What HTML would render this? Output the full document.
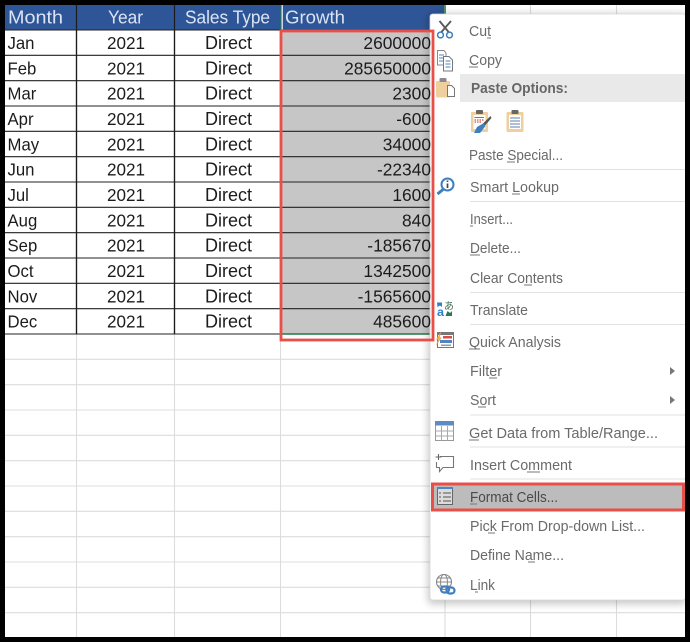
<!DOCTYPE html>
<html><head><meta charset="utf-8"><style>
html,body{margin:0;padding:0;background:#000;width:690px;height:642px;overflow:hidden}
svg{display:block;position:absolute;left:0;top:0}
text{font-family:"Liberation Sans",sans-serif}
.c{font-size:18px;fill:#1c1c1c}
.h{font-size:18px;fill:#dbe4f2}
.m{font-size:15px;fill:#6a6a6a}
.u{stroke:#777;stroke-width:1}
.g{stroke:#dcdcdc;stroke-width:1.1;fill:none}
.k{stroke:#222;stroke-width:1.1}
</style></head><body>
<svg width="690" height="642" viewBox="0 0 690 642" xmlns="http://www.w3.org/2000/svg">
<defs><filter id="s" x="-10%" y="-10%" width="120%" height="120%"><feGaussianBlur stdDeviation="4"/></filter>
<filter id="b"><feGaussianBlur stdDeviation="0.3"/></filter></defs>
<rect width="690" height="642" fill="#000"/>
<g filter="url(#b)">
<rect x="5" y="5" width="680" height="632" fill="#fff"/>
<!-- light grid -->
<path class="g" d="M5 359.3H685M5 384.7H685M5 410H685M5 435.3H685M5 460.7H685M5 486H685M5 511.3H685M5 536.7H685M5 562H685M5 587.3H685M5 612.7H685M76.500 334V637M174.500 334V637M280.500 334V637M445 5V637M530.500 5V637M616.500 5V637M445 30H685M445 55H685"/>
<!-- header -->
<rect x="5" y="5" width="439" height="25" fill="#2f5597"/>
<!-- selection -->
<rect x="281" y="30" width="163" height="304" fill="#c6c6c6"/>
<path d="M76.500 5V334M174.500 5V334" stroke="#1a1a1a" stroke-width="1.200"/>
<path d="M281 5V30" stroke="#1f7a45" stroke-width="1"/><path d="M282.200 5V30" stroke="#e8eef6" stroke-width="1.300"/>
<path d="M445 5V30" stroke="#1f7a45" stroke-width="1.600"/>
<path class="k" d="M5 30H444M5 55.300H444M5 80.700H444M5 106H444M5 131.300H444M5 156.700H444M5 182H444M5 207.300H444M5 232.700H444M5 258H444M5 283.300H444M5 308.700H444M5 334H280"/>
<path d="M281 334H444" stroke="#1f7a45" stroke-width="1.600"/>
<text class="h" x="8" y="23.500" textLength="55" lengthAdjust="spacingAndGlyphs">Month</text>
<text class="h" x="108" y="23.500" textLength="35" lengthAdjust="spacingAndGlyphs">Year</text>
<text class="h" x="185" y="23.500" textLength="85" lengthAdjust="spacingAndGlyphs">Sales Type</text>
<text class="h" x="285" y="23.500" textLength="60" lengthAdjust="spacingAndGlyphs">Growth</text>
<g transform="translate(7.500 0) scale(.93 1)">
<text class="c" x="0" y="49">Jan</text><text class="c" x="0" y="74.300">Feb</text><text class="c" x="0" y="99.700">Mar</text><text class="c" x="0" y="125">Apr</text><text class="c" x="0" y="150.300">May</text><text class="c" x="0" y="175.700">Jun</text><text class="c" x="0" y="201">Jul</text><text class="c" x="0" y="226.300">Aug</text><text class="c" x="0" y="251.700">Sep</text><text class="c" x="0" y="277">Oct</text><text class="c" x="0" y="302.300">Nov</text><text class="c" x="0" y="327.700">Dec</text>
</g>
<g transform="translate(107 0) scale(.95 1)">
<text class="c" x="0" y="49">2021</text><text class="c" x="0" y="74.300">2021</text><text class="c" x="0" y="99.700">2021</text><text class="c" x="0" y="125">2021</text><text class="c" x="0" y="150.300">2021</text><text class="c" x="0" y="175.700">2021</text><text class="c" x="0" y="201">2021</text><text class="c" x="0" y="226.300">2021</text><text class="c" x="0" y="251.700">2021</text><text class="c" x="0" y="277">2021</text><text class="c" x="0" y="302.300">2021</text><text class="c" x="0" y="327.700">2021</text>
</g>
<text class="c" x="205" y="49" textLength="47" lengthAdjust="spacingAndGlyphs">Direct</text><text class="c" x="205" y="74.300" textLength="47" lengthAdjust="spacingAndGlyphs">Direct</text><text class="c" x="205" y="99.700" textLength="47" lengthAdjust="spacingAndGlyphs">Direct</text><text class="c" x="205" y="125" textLength="47" lengthAdjust="spacingAndGlyphs">Direct</text><text class="c" x="205" y="150.300" textLength="47" lengthAdjust="spacingAndGlyphs">Direct</text><text class="c" x="205" y="175.700" textLength="47" lengthAdjust="spacingAndGlyphs">Direct</text><text class="c" x="205" y="201" textLength="47" lengthAdjust="spacingAndGlyphs">Direct</text><text class="c" x="205" y="226.300" textLength="47" lengthAdjust="spacingAndGlyphs">Direct</text><text class="c" x="205" y="251.700" textLength="47" lengthAdjust="spacingAndGlyphs">Direct</text><text class="c" x="205" y="277" textLength="47" lengthAdjust="spacingAndGlyphs">Direct</text><text class="c" x="205" y="302.300" textLength="47" lengthAdjust="spacingAndGlyphs">Direct</text><text class="c" x="205" y="327.700" textLength="47" lengthAdjust="spacingAndGlyphs">Direct</text>
<path d="M76.500 30V334M174.500 30V334M280.500 30V334" stroke="#1a1a1a" stroke-width="1.200"/>
<!-- menu shadow + body -->
<rect x="428" y="14" width="258" height="590" rx="3" fill="#000" opacity=".22" filter="url(#s)"/>
<rect x="430" y="14" width="255" height="586" rx="3" fill="#fff"/>
<path d="M430 17V597Q430 600 433 600H685M430 17Q430 14 433 14H685" fill="none" stroke="#d8d8d8" stroke-width=".8"/>
<rect x="685" y="5" width="5" height="637" fill="#000"/>
<rect x="5" y="637" width="685" height="5" fill="#000"/>
<!-- values -->
<g transform="translate(431 0) scale(.965 1)" text-anchor="end">
<text class="c" x="0" y="49">2600000</text><text class="c" x="0" y="74.300">285650000</text><text class="c" x="0" y="99.700">2300</text><text class="c" x="0" y="125">-600</text><text class="c" x="0" y="150.300">34000</text><text class="c" x="0" y="175.700">-22340</text><text class="c" x="0" y="201">1600</text><text class="c" x="0" y="226.300">840</text><text class="c" x="0" y="251.700">-185670</text><text class="c" x="0" y="277">1342500</text><text class="c" x="0" y="302.300">-1565600</text><text class="c" x="0" y="327.700">485600</text>
</g>
<!-- paste band + separators -->
<rect x="460" y="74" width="225" height="28" fill="#e9e9e9"/>
<path d="M470 169.500H685M470 201.500H685M470 292.500H685M470 324.500H685M470 415H685M470 447H685M470 479H685" stroke="#e2e2e2" stroke-width="1"/>
<!-- highlight -->
<rect x="432.500" y="484" width="251" height="26" fill="#bcbcbc" stroke="#e8504a" stroke-width="3"/>
<!-- menu text -->
<text class="m" x="469" y="36" textLength="22" lengthAdjust="spacingAndGlyphs">Cut</text>
<text class="m" x="469" y="65" textLength="33" lengthAdjust="spacingAndGlyphs">Copy</text>
<text class="m" x="471" y="93" textLength="97" lengthAdjust="spacingAndGlyphs" font-weight="700" style="fill:#666">Paste Options:</text>
<text class="m" x="469" y="160" textLength="94" lengthAdjust="spacingAndGlyphs">Paste Special...</text>
<text class="m" x="470" y="192" textLength="89" lengthAdjust="spacingAndGlyphs">Smart Lookup</text>
<text class="m" x="470" y="224" textLength="43" lengthAdjust="spacingAndGlyphs">Insert...</text>
<text class="m" x="470" y="253" textLength="51" lengthAdjust="spacingAndGlyphs">Delete...</text>
<text class="m" x="470" y="283" textLength="93" lengthAdjust="spacingAndGlyphs">Clear Contents</text>
<text class="m" x="470" y="315" textLength="58" lengthAdjust="spacingAndGlyphs">Translate</text>
<text class="m" x="469" y="347" textLength="92" lengthAdjust="spacingAndGlyphs">Quick Analysis</text>
<text class="m" x="470" y="376" textLength="32" lengthAdjust="spacingAndGlyphs">Filter</text>
<text class="m" x="470" y="405" textLength="26" lengthAdjust="spacingAndGlyphs">Sort</text>
<text class="m" x="469" y="438" textLength="189" lengthAdjust="spacingAndGlyphs">Get Data from Table/Range...</text>
<text class="m" x="470" y="470" textLength="102" lengthAdjust="spacingAndGlyphs">Insert Comment</text>
<text class="m" x="470" y="502" textLength="88" lengthAdjust="spacingAndGlyphs" style="fill:#4a4a4a">Format Cells...</text>
<text class="m" x="470" y="531" textLength="175" lengthAdjust="spacingAndGlyphs">Pick From Drop-down List...</text>
<text class="m" x="470" y="560" textLength="94" lengthAdjust="spacingAndGlyphs">Define Name...</text>
<text class="m" x="470" y="590" textLength="25" lengthAdjust="spacingAndGlyphs">Link</text>
<!-- access-key underlines -->
<path class="u" d="M487 38H491M469 67H478M507 162H515M512 194H520M470 226H473M470 255H480M524 285H532M469 349H480M489 378H497M478 407H486M469 440H479M527 472H540M470 504H477M488 533H495M528 562H535M475 592H478"/>
<!-- submenu arrows -->
<path d="M670 367L675 371L670 375Z M670 396L675 400L670 404Z" fill="#777"/>
<!-- scissors -->
<g fill="none">
<path d="M439.500 21L449 32.500M451 21L441 32.500" stroke="#5a5a5a" stroke-width="1.900"/>
<circle cx="440.500" cy="35" r="2.900" stroke="#3f7fbd" stroke-width="1.500"/>
<circle cx="449.500" cy="35" r="2.900" stroke="#3f7fbd" stroke-width="1.500"/>
</g>
<!-- copy -->
<g>
<path d="M437.500 50.500H444L446 53V65H437.500Z" fill="#fff" stroke="#888"/>
<path d="M439 55H444M439 58H444M439 61H444" stroke="#4d86c0"/>
<path d="M443.500 56.500H449L452.500 60V71H443.500Z" fill="#fff" stroke="#777"/>
<path d="M445.500 61H450.500M445.500 64H450.500M445.500 67H450.500" stroke="#4d86c0"/>
</g>
<!-- paste -->
<g>
<rect x="436" y="81" width="14" height="16.500" rx="1" fill="#f0cf9f"/>
<rect x="439.500" y="78" width="7" height="4" rx="1" fill="#8a8a8a"/>
<path d="M447.500 85.500H451.500L454.500 88.500V96.500H447.500Z" fill="#fff" stroke="#777"/>
</g>
<!-- paste option 1 -->
<g>
<rect x="471" y="112" width="17" height="20" rx="1" fill="#f0cf9f"/>
<rect x="473.500" y="115" width="12" height="14" fill="#fff"/>
<rect x="476" y="110" width="7" height="4" rx="1" fill="#666"/>
<path d="M474.500 117.500H484" stroke="#5b7faf"/>
<path d="M474.500 120H484M474.500 122H482" stroke="#d6504a" stroke-width="1.200" stroke-dasharray="1.500 1"/>
<path d="M490.500 116L483 123.500L485 125.500L491.500 118Z" fill="#555"/>
<path d="M483 123.500L477 127L474 133H480L485.500 126Z" fill="#3f7fbd"/>
</g>
<!-- paste option 2 -->
<g>
<rect x="506.500" y="112" width="17" height="20" rx="1" fill="#f0cf9f"/>
<rect x="509" y="115" width="12" height="14" fill="#fff"/>
<rect x="511.500" y="110" width="7" height="4" rx="1" fill="#666"/>
<path d="M510 118H520M510 121H520M510 124H520M510 127H520" stroke="#5b7faf"/>
</g>
<!-- smart lookup -->
<g fill="none">
<circle cx="447.500" cy="184.500" r="6" fill="#fff" stroke="#3f7fbd" stroke-width="2"/>
<path d="M443 189.500L437.500 194" stroke="#3f7fbd" stroke-width="3"/>
<path d="M447.500 183.500V188" stroke="#444" stroke-width="1.700"/><path d="M447.500 180.500V182" stroke="#444" stroke-width="1.700"/>
</g>
<!-- translate -->
<g>
<text x="444" y="309.500" style="font-family:'Noto Sans CJK JP',sans-serif;font-size:10px;fill:#3f6e55">あ</text>
<text x="437" y="316" style="font-size:12px;fill:#2f7fc7;font-weight:700" textLength="7" lengthAdjust="spacingAndGlyphs">a</text>
<path d="M437 302.500H442V307L440 305.500L437.500 307Z" fill="#2f7fc7"/>
<path d="M445.500 316H452V311L450 313L447.500 311Z" fill="#2a7a4b"/>
</g>
<!-- quick analysis -->
<g>
<rect x="437.500" y="332.500" width="16" height="15" fill="#fff" stroke="#777"/>
<path d="M437.500 334H453.500" stroke="#777" stroke-width="2"/>
<rect x="443" y="336" width="9" height="2.500" fill="#d6504a"/>
<rect x="440" y="340" width="12" height="3" fill="#4d86c0"/>
<rect x="441" y="344.500" width="10" height="1.500" fill="#999"/>
<path d="M441.500 331L436 339.500H438.500L435.500 346L442 337.500H439.500Z" fill="#eda94f"/>
</g>
<!-- table -->
<g fill="none">
<rect x="435.500" y="421.500" width="18" height="19" fill="#fff" stroke="#999"/>
<rect x="435" y="421" width="19" height="4.500" fill="#5b8cc2"/>
<path d="M435.500 431H453.500M435.500 436H453.500M441.500 426V440.500M447.500 426V440.500" stroke="#aaa"/>
</g>
<!-- comment -->
<g fill="none" stroke="#777" stroke-width="1.100">
<path d="M440 456.500H453.500V467.500H443L439.500 471.500V467.500H436.500V462"/>
<path d="M438.500 454V460M435.500 457H441.500" stroke="#666"/>
</g>
<!-- format cells -->
<g>
<rect x="437.500" y="487.500" width="15" height="17" fill="#dcdcdc" stroke="#666"/>
<rect x="437" y="487" width="16" height="2" fill="#4d86c0"/>
<path d="M443 493H451M443 497H451M443 501H451" stroke="#555"/>
<path d="M439 493H441M439 497H441M439 501H441" stroke="#555"/>
</g>
<!-- link -->
<g fill="none">
<circle cx="444" cy="582" r="7.500" fill="#fff" stroke="#888" stroke-width="1.100"/>
<ellipse cx="444" cy="582" rx="3.500" ry="7.500" stroke="#888"/>
<path d="M436.500 582H451.500M437.500 578H450.500M437.500 586H450.500" stroke="#888" stroke-width=".9"/>
<rect x="441" y="586.500" width="8" height="6" rx="3" stroke="#3f7fbd" stroke-width="2.200"/>
<rect x="446.500" y="587.500" width="8" height="6" rx="3" stroke="#3f7fbd" stroke-width="2.200"/>
</g>
<!-- red box over selection -->
<rect x="281" y="31" width="152" height="309" fill="none" stroke="#e8504a" stroke-width="2.800"/>
</g>
</svg>
</body></html>
